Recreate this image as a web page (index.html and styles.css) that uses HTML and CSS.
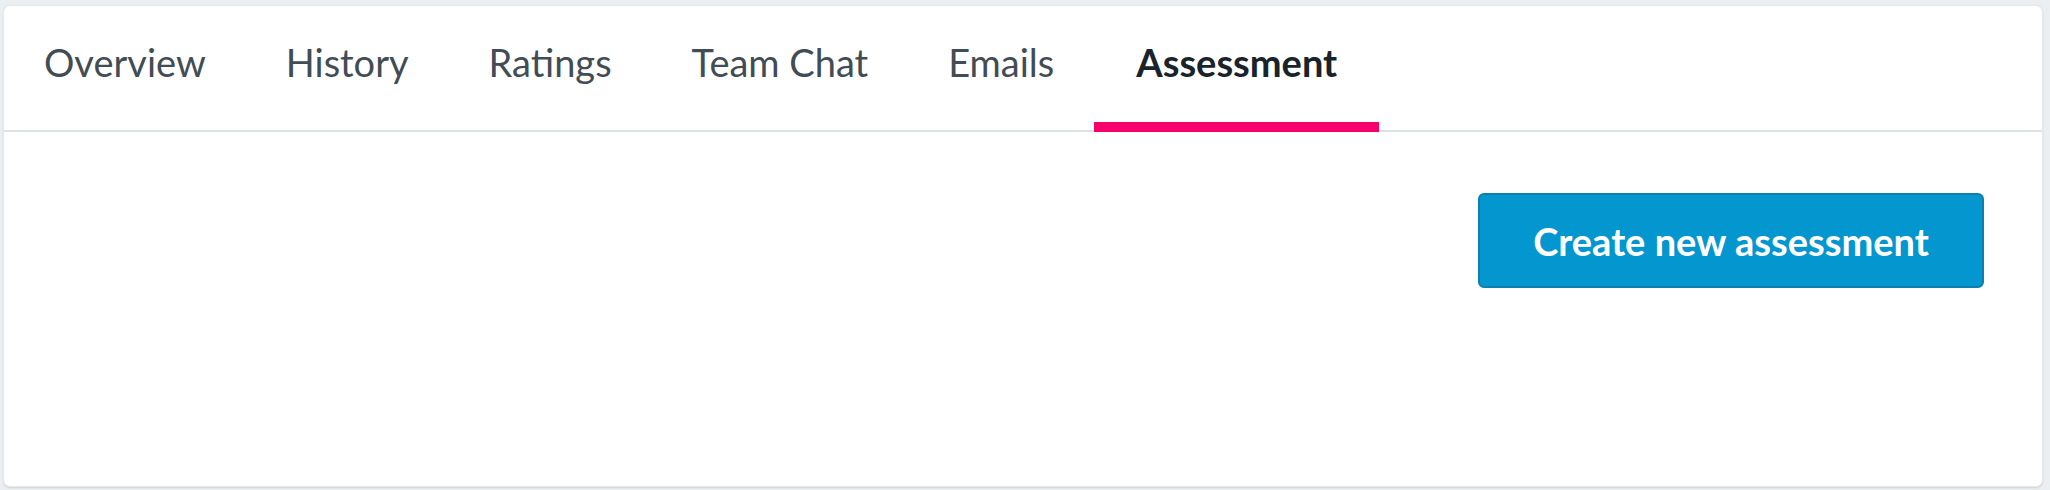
FILE: index.html
```html
<!DOCTYPE html>
<html lang="en">
<head>
<meta charset="utf-8">
<title>Assessment</title>
<link rel="stylesheet" href="styles.css">
</head>
<body>
<div class="card">
  <nav class="tabs">
    <a class="tab">Overview</a>
    <a class="tab">History</a>
    <a class="tab">Ratings</a>
    <a class="tab">Team Chat</a>
    <a class="tab">Emails</a>
    <a class="tab active">Assessment</a>
  </nav>
  <div class="content">
    <button class="btn-primary">Create new assessment</button>
  </div>
</div>
</body>
</html>
```
FILE: styles.css
```css
html, body {
  margin: 0;
  padding: 0;
  background: #eceff2;
  height: 100%;
}
body {
  padding: 5px 7px 3px 3px;
  box-sizing: border-box;
  font-family: "Lato", "Open Sans", sans-serif;
}
.card {
  background: #fff;
  border-radius: 7px;
  height: 482px;
  box-sizing: border-box;
  box-shadow: 0 1px 2px rgba(0, 0, 0, 0.12);
  border: 1px solid #e6e9ec;
  display: flex;
  flex-direction: column;
}
.tabs {
  display: flex;
  height: 126px;
  border-bottom: 2px solid #dfe2e5;
  box-sizing: border-box;
}
.tab {
  display: flex;
  align-items: center;
  padding: 0 40px 4px;
  font-size: 38px;
  color: #424c55;
  border-bottom: 10px solid transparent;
  margin-bottom: -2px;
  white-space: nowrap;
}
.tab.active {
  color: #18232b;
  font-weight: 700;
  padding: 0 42px 4px;
  border-bottom-color: #f7006b;
}
.content {
  flex: 1;
  display: flex;
  justify-content: flex-end;
  align-items: flex-start;
  padding: 61px 58px 0 0;
}
.btn-primary {
  width: 506px;
  height: 95px;
  background: #0396cf;
  border: 2px solid #0b7fb0;
  border-radius: 6px;
  color: #fff;
  font-family: "Lato", "Open Sans", sans-serif;
  font-size: 38px;
  font-weight: 700;
  cursor: pointer;
}
```
